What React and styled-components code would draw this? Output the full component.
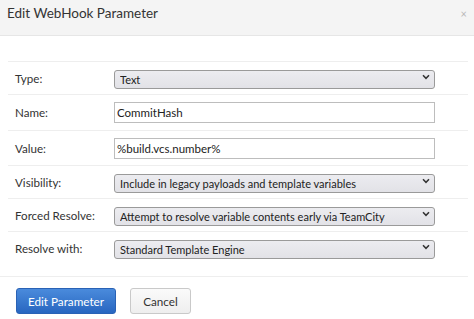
import React from "react";
import styled, { createGlobalStyle } from "styled-components";

const Global = createGlobalStyle`
  html, body { margin: 0; padding: 0; background: #fff; }
  body { font-family: Lato, "Open Sans", sans-serif; color: #333; }
  * { box-sizing: border-box; }
`;

const Dialog = styled.div`
  width: 474px;
  height: 319px;
  background: #fff;
  display: flex;
  flex-direction: column;
`;

const Header = styled.div`
  height: 36px;
  background: #f4f4f4;
  border-bottom: 1px solid #e6e6e6;
  display: flex;
  align-items: flex-start;
  justify-content: space-between;
  padding: 3px 7px 0 7px;
`;

const Title = styled.h1`
  margin: 0;
  font-size: 13.5px;
  font-weight: 400;
  color: #333;
  line-height: 20px;
`;

const Close = styled.span`
  font-size: 11px;
  color: #b8b8b8;
  line-height: 20px;
  margin-top: 1px;
`;

const Body = styled.div`
  padding: 25px 6px 0 8px;
`;

const Table = styled.div`
  display: flex;
  flex-direction: column;
  border-top: 1px solid #eeeeee;
`;

const Row = styled.div`
  display: grid;
  grid-template-columns: 106px 1fr;
  align-items: center;
  height: ${(p) => p.$h}px;
  border-bottom: ${(p) => (p.$last ? "none" : "1px solid #eeeeee")};
`;

const Label = styled.label`
  padding-left: 7px;
  font-size: 11.6px;
  color: #333;
`;

const SelectBox = styled.div`
  position: relative;
  width: 321px;
`;

const Select = styled.select`
  appearance: none;
  -webkit-appearance: none;
  width: 100%;
  height: 19px;
  border: 1px solid #9a9a9a;
  border-radius: 3px;
  background: linear-gradient(#ececf0, #e2e2e7);
  font-family: Lato, sans-serif;
  font-size: 11px;
  color: #222;
  padding: 0 0 0 5px;
  line-height: 17px;
  outline: none;
`;

const Chevron = styled.svg`
  position: absolute;
  right: 5px;
  top: 6px;
  pointer-events: none;
`;

const Input = styled.input`
  width: 321px;
  height: 21px;
  border: 1px solid #bdbdbd;
  border-radius: 0;
  background: #fff;
  font-family: Lato, sans-serif;
  font-size: 11.5px;
  color: #222;
  padding: 0 2px;
  outline: none;
`;

const Footer = styled.div`
  margin: 11px 6px 0 0;
  border-top: 1px solid #eeeeee;
  padding: 11px 0 0 16px;
`;

const ButtonRow = styled.div`
  display: flex;
  gap: 14px;
`;

const Button = styled.button`
  height: 26px;
  width: ${(p) => p.$w}px;
  padding: 0;
  font-family: Lato, sans-serif;
  font-size: 11.7px;
  border-radius: 3px;
  cursor: pointer;
  color: ${(p) => (p.$primary ? "#fff" : "#333")};
  background: ${(p) =>
    p.$primary
      ? "linear-gradient(#4a8bdc, #2866c0)"
      : "linear-gradient(#fafafa, #eeeeee)"};
  border: 1px solid ${(p) => (p.$primary ? "#2a62b5" : "#c9c9c9")};
`;

const ChevronIcon = () => (
  <Chevron width="8" height="6" viewBox="0 0 8 6">
    <path d="M1 1.2 L4 4.3 L7 1.2" fill="none" stroke="#333" strokeWidth="1.5" />
  </Chevron>
);

const SelectField = ({ value }) => (
  <SelectBox>
    <Select defaultValue={value}>
      <option>{value}</option>
    </Select>
    <ChevronIcon />
  </SelectBox>
);

export default function App() {
  return (
    <>
      <Global />
      <Dialog>
        <Header>
          <Title>Edit WebHook Parameter</Title>
          <Close>×</Close>
        </Header>
        <Body>
          <Table>
            <Row $h={33}>
              <Label>Type:</Label>
              <SelectField value="Text" />
            </Row>
            <Row $h={36}>
              <Label>Name:</Label>
              <Input defaultValue="CommitHash" />
            </Row>
            <Row $h={35}>
              <Label>Value:</Label>
              <Input defaultValue="%build.vcs.number%" />
            </Row>
            <Row $h={33}>
              <Label>Visibility:</Label>
              <SelectField value="Include in legacy payloads and template variables" />
            </Row>
            <Row $h={33}>
              <Label>Forced Resolve:</Label>
              <SelectField value="Attempt to resolve variable contents early via TeamCity" />
            </Row>
            <Row $h={33} $last>
              <Label>Resolve with:</Label>
              <SelectField value="Standard Template Engine" />
            </Row>
          </Table>
        </Body>
        <Footer>
          <ButtonRow>
            <Button $primary $w={100}>Edit Parameter</Button>
            <Button $w={61}>Cancel</Button>
          </ButtonRow>
        </Footer>
      </Dialog>
    </>
  );
}
